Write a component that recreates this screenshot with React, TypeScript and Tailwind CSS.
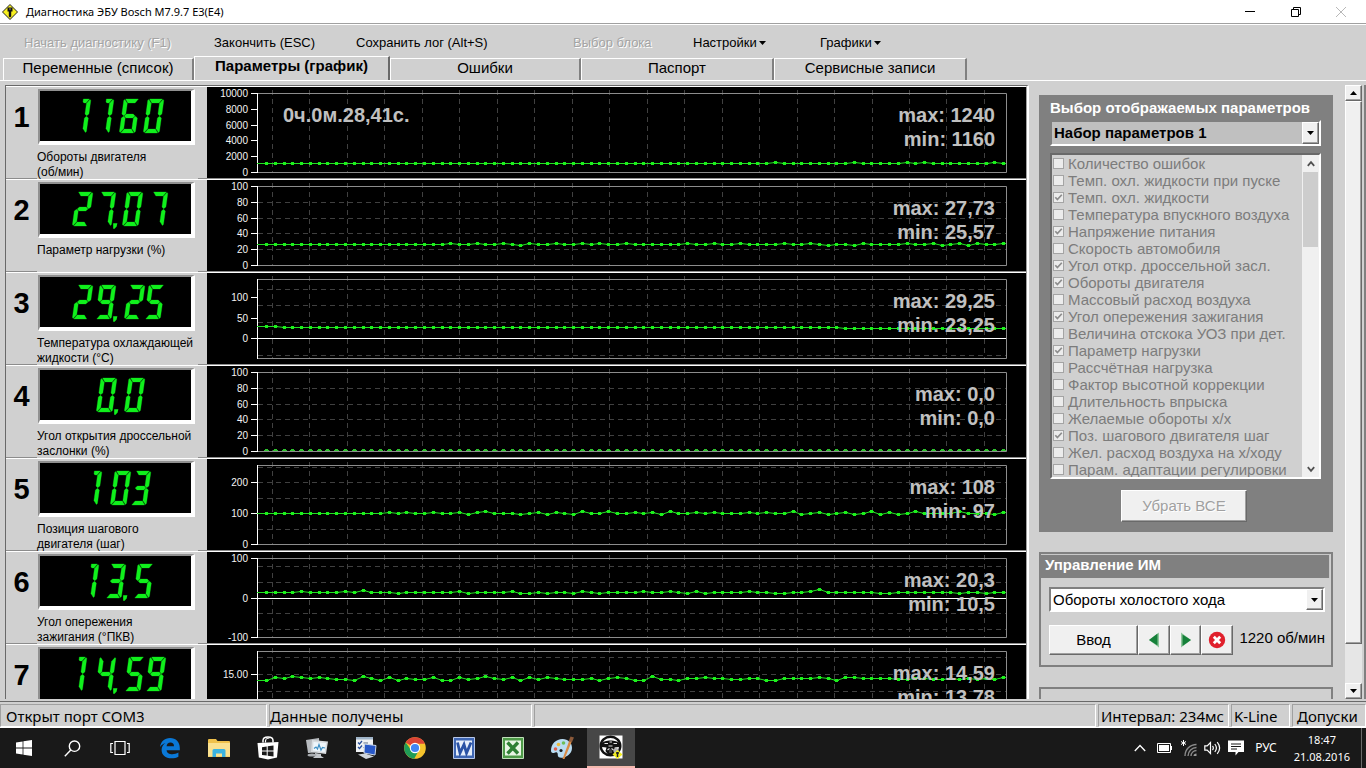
import React from "react";

type Param = {
  id: number;
  digits: string;
  edges: number[];
  label: string[];
  max: string;
  min: string;
  base: number;
  offsets: Record<number, number>;
  ticks: [number, string][];
  grid: number[];
  zero?: number;
  timer?: string;
};

const percentTicks: [number, string][] = [
  [6, "100"],
  [22, "80"],
  [38, "60"],
  [53, "40"],
  [69, "20"],
  [85, "0"],
];

const afrTrace = [
  1, -2, -1, -3, -2, -1, -2, -1, 0, 0, 1, -3, -1, 1, -2, 1, -1, 0, 0, -2, 1, 1, -2, 0, -1, -3, -1, 0, -2, 1, -2, 0, -2,
  -1, 0, 0, 0, -1, 1, -1, -2, -1, 1, 1, -3, 0, 0, 1, -1, -1, -2, -1, -1, 0, 0, -1, -1, 1, 1, -1, -1, -1, -1, -2, -1, 1,
  -2, -2, -1, -1, -1, -1, 0, 0, -1, -1, 0, 0, -1, 0, -1, 0, -1, 0, -2,
];

const lateDrop: Record<number, number> = { 0: -1, 1: -1 };
for (let i = 66; i < 85; i++) lateDrop[i] = 1;

const params: Param[] = [
  {
    id: 1,
    digits: "1160",
    edges: [51, 74, 100, 124],
    label: ["Обороты двигателя", "(об/мин)"],
    max: "1240",
    min: "1160",
    base: 76,
    offsets: { 58: -1, 67: -1, 73: -1, 75: -1, 83: -1 },
    ticks: [
      [6, "10000"],
      [22, "8000"],
      [38, "6000"],
      [53, "4000"],
      [69, "2000"],
      [85, "0"],
    ],
    grid: [],
    timer: "0ч.0м.28,41с.",
  },
  {
    id: 2,
    digits: "27,07",
    edges: [53, 76, 103, 128],
    label: ["Параметр нагрузки (%)"],
    max: "27,73",
    min: "25,57",
    base: 64,
    offsets: {
      21: -1, 24: -1, 27: -1, 29: 1, 30: -1, 33: -1, 36: -1, 38: -1, 41: -1, 48: -1, 51: -1, 54: -1, 59: -1, 62: -1,
      64: 1, 67: 1, 68: -1, 73: -1, 76: -1, 77: 1, 79: -1, 80: 1, 81: -1, 84: -1,
    },
    ticks: percentTicks,
    grid: [22, 38, 53, 69],
  },
  {
    id: 3,
    digits: "29,25",
    edges: [53, 76, 105, 125],
    label: ["Температура охлаждающей", "жидкости (°С)"],
    max: "29,25",
    min: "23,25",
    base: 54,
    offsets: lateDrop,
    ticks: [
      [24, "100"],
      [45, "50"],
      [65, "0"],
    ],
    grid: [16, 32, 49, 82],
    zero: 65,
  },
  {
    id: 4,
    digits: "0,0",
    edges: [77, 105],
    label: ["Угол открытия дроссельной", "заслонки (%)"],
    max: "0,0",
    min: "0,0",
    base: 85,
    offsets: {},
    ticks: percentTicks,
    grid: [22, 38, 53, 69],
  },
  {
    id: 5,
    digits: "103",
    edges: [62, 91, 111],
    label: ["Позиция шагового", "двигателя (шаг)"],
    max: "108",
    min: "97",
    base: 54,
    offsets: {
      14: -1, 16: -1, 19: -1, 22: -1, 23: 1, 24: -1, 25: -2, 29: 1, 31: -1, 32: 1, 33: -1, 35: 1, 36: -2, 39: -2,
      42: -1, 44: -1, 45: 1, 46: -2, 49: -1, 51: -1, 55: -1, 57: -1, 60: -2, 61: 1, 63: -1, 64: 1, 66: -1, 67: 1,
      69: -2, 70: 1, 71: -1, 72: 1, 74: -2, 79: -2, 83: 1, 84: -1,
    },
    ticks: [
      [23, "200"],
      [54, "100"],
      [85, "0"],
    ],
    grid: [8, 23, 39, 70],
  },
  {
    id: 6,
    digits: "13,5",
    edges: [59, 86, 114],
    label: ["Угол опережения", "зажигания (°ПКВ)"],
    max: "20,3",
    min: "10,5",
    base: 40,
    offsets: {
      4: -1, 9: -1, 11: -2, 15: 1, 22: -1, 23: 1, 28: -1, 29: 1, 30: 1, 32: 1, 35: 1, 36: -1, 38: 1, 43: -1, 46: -1,
      48: 1, 49: -1, 50: 1, 55: -1, 58: 1, 59: 1, 62: -1, 63: -3, 70: 1, 71: 1, 79: 1, 82: 1,
    },
    ticks: [
      [6, "100"],
      [46, "0"],
      [85, "-100"],
    ],
    grid: [14, 30, 61, 77],
    zero: 46,
  },
  {
    id: 7,
    digits: "14,59",
    edges: [47, 76, 105, 126],
    label: [],
    max: "14,59",
    min: "13,78",
    base: 34,
    offsets: Object.fromEntries(afrTrace.map((v, i) => [i, v])),
    ticks: [[29, "15.00"]],
    grid: [12, 29, 46],
  },
];

const segments: Record<string, string> = {
  a: "M2.6 0H15.4L12.6 3.9H5.4z",
  b: "M16.1 0.6L17 1.6V15L15 16.7L13.1 15V4.400z",
  c: "M15 17.300L17 19V32.400L16.100 33.400L13.100 29.600V19z",
  d: "M2.600 34H15.400L12.600 30.100H5.400z",
  e: "M3 17.300L4.900 19V29.600L1.900 33.400L1 32.400V19z",
  f: "M1.900 0.600L4.900 4.400V15L3 16.700L1 15V1.600z",
  g: "M3.600 17L5.600 15.100H12.400L14.400 17L12.400 18.900H5.600z",
  t: "M9.400 0H15.400L12.600 3.900H10.500L9.400 2.900z",
};

const glyphs: Record<string, string> = {
  "0": "abcdef",
  "1": "tbc",
  "2": "abdeg",
  "3": "abcdg",
  "4": "bcfg",
  "5": "acdfg",
  "6": "acdefg",
  "7": "abc",
  "9": "abcdfg",
};

function Led({ digits, edges }: { digits: string; edges: number[] }) {
  const parts: React.ReactNode[] = [];
  let n = 0;
  for (const ch of digits) {
    if (ch === ",") {
      parts.push(<path key={"c" + n} d={`M${edges[n - 1] - 2.8} 39.2h4.200l-0.800 3.200-2 2.400h-1.400z`} fill="#10f01c" />);
      continue;
    }
    parts.push(
      <g
        key={n}
        transform={`translate(${edges[n] - 17} 8) skewX(-8)`}
        fill="#10f01c"
        stroke="#10f01c"
        strokeWidth="0.3"
        strokeLinejoin="round"
      >
        {glyphs[ch].split("").map((s) => (
          <path key={s} d={segments[s]} />
        ))}
      </g>
    );
    n++;
  }
  return (
    <div className="ml-px h-[56px] w-[157px] border-t-2 border-r-4 border-b-4 border-l-2 border-t-[#909090] border-r-white border-b-white border-l-[#909090] bg-black">
      <svg className="block h-[50px] w-[151px]" viewBox="0 0 151 50" role="img" aria-label={digits}>
        {parts}
      </svg>
    </div>
  );
}

const verticals = Array.from({ length: 20 }, (_, k) => Math.round(65 + k * 37.47) + 0.5);

function Chart({ p }: { p: Param }) {
  const pts = Array.from({ length: 85 }, (_, i) => ({
    x: Math.round(59 + i * 8.775),
    y: p.base + (p.offsets[i] ?? 0),
  }));
  const line = "M50 " + (pts[0].y + 0.5) + pts.map((q) => `L${q.x + 0.5} ${q.y + 0.5}`).join("");
  const isFlatZero = p.base === 85;
  return (
    <div className="relative h-[91px] min-w-0 flex-1 overflow-hidden bg-black">
      <svg className="block h-[91px] w-full" viewBox="0 0 819 91" preserveAspectRatio="none">
        <g stroke="#404040" strokeWidth="1" strokeDasharray="5 4">
          {verticals.map((x) => (
            <path key={x} d={`M${x} 3V85`} />
          ))}
          {p.grid.map((y) => (
            <path key={y} d={`M51 ${y + 0.5}H799`} />
          ))}
        </g>
        {isFlatZero &&
          pts.map((q) => <path key={q.x} d={`M${q.x - 2} 85v-1h1v-1h3v1h1v1z`} fill="#2fc32f" />)}
        <path d="M50 6.5H799.5V85.5H50" fill="none" stroke="#8c8c8c" />
        {p.zero !== undefined && <path d={`M50 ${p.zero + 0.5}H799`} stroke="#ffffff" />}
        <path d="M50.5 6V86" stroke="#ffffff" />
        {!isFlatZero && (
          <>
            <path d={line} fill="none" stroke="#24dc24" strokeWidth="1" />
            {pts.map((q) => (
              <path key={q.x} d={`M${q.x - 1} ${q.y - 1}h3v1h1v1h-1v1h-3v-1h-1v-1h1z`} fill="#1cf01c" />
            ))}
          </>
        )}
        {p.ticks.map(([y, t]) => (
          <g key={t}>
            <path d={`M44 ${y + 0.5}H50`} stroke="#ffffff" />
            <text
              x="41"
              y={y + 4}
              textAnchor="end"
              fill="#f4f4f4"
              fontSize="10"
              fontFamily="'Liberation Sans Narrow','Liberation Sans',sans-serif"
            >
              {t}
            </text>
          </g>
        ))}
      </svg>
      {p.timer && (
        <span className="absolute top-[16px] left-[76px] text-[20px] leading-6 font-bold text-[#c0c0c0]">{p.timer}</span>
      )}
      <div className="absolute top-[16px] right-[31px] text-right text-[20px] leading-6 font-bold text-[#c0c0c0]">
        <div>max: {p.max}</div>
        <div>min: {p.min}</div>
      </div>
    </div>
  );
}

function ParamRow({ p }: { p: Param }) {
  return (
    <section className="flex h-[93px] shrink-0 border-b border-white">
      <div className="w-[31px] shrink-0 border-b border-[#8c8c8c] pt-3 text-center text-[29px] leading-9 font-bold">
        {p.id}
      </div>
      <div className="w-[161px] shrink-0 pt-[2px]">
        <Led digits={p.digits} edges={p.edges} />
        <div className="pt-[5px] text-[12px] leading-[15px] whitespace-nowrap">
          {p.label.map((l) => (
            <div key={l}>{l}</div>
          ))}
        </div>
      </div>
      <div className="w-[9px] shrink-0 border-b border-[#8c8c8c]" />
      <div className="min-w-0 flex-1 border-b border-[#8c8c8c]">
        <Chart p={p} />
      </div>
    </section>
  );
}

const options: [string, boolean][] = [
  ["Количество ошибок", false],
  ["Темп. охл. жидкости при пуске", false],
  ["Темп. охл. жидкости", true],
  ["Температура впускного воздуха", false],
  ["Напряжение питания", true],
  ["Скорость автомобиля", false],
  ["Угол откр. дроссельной засл.", true],
  ["Обороты двигателя", true],
  ["Массовый расход воздуха", false],
  ["Угол опережения зажигания", true],
  ["Величина отскока УОЗ при дет.", false],
  ["Параметр нагрузки", true],
  ["Рассчётная нагрузка", false],
  ["Фактор высотной коррекции", false],
  ["Длительность впрыска", false],
  ["Желаемые обороты х/х", false],
  ["Поз. шагового двигателя шаг", true],
  ["Жел. расход воздуха на х/ходу", false],
  ["Парам. адаптации регулировки", false],
];

function Option({ text, checked }: { text: string; checked: boolean }) {
  return (
    <label className="flex h-[17px] shrink-0 items-center gap-1 pl-px text-[15px] leading-[17px] whitespace-nowrap text-[#7c7c7c]">
      <span className="relative block h-[11px] w-[11px]">
        <input
          type="checkbox"
          disabled
          defaultChecked={checked}
          className="block h-[11px] w-[11px] appearance-none border border-[#a4a4a4] bg-[#ececec]"
        />
        {checked && (
          <svg className="absolute inset-0 h-[11px] w-[11px]" viewBox="0 0 11 11">
            <path d="M2.3 5.2L4.4 7.6L8.8 2.8" fill="none" stroke="#8c8c8c" strokeWidth="1.7" />
          </svg>
        )}
      </span>
      {text}
    </label>
  );
}

function Arrow({ up = false }: { up?: boolean }) {
  return (
    <svg className="block h-1 w-[7px]" viewBox="0 0 7 4">
      <path d={up ? "M0 4L3.5 0L7 4z" : "M0 0H7L3.5 4z"} fill="#000" />
    </svg>
  );
}

const bevel =
  "border border-t-white border-l-white border-r-[#696969] border-b-[#696969] bg-[#f0f0f0] shadow-[inset_-1px_-1px_0_#a0a0a0]";

function Picker({ label, value, className, height }: { label: string; value: string; className: string; height: string }) {
  return (
    <div
      className={
        "relative border-2 border-t-[#808080] border-r-white border-b-white border-l-[#808080] " + height + " " + className
      }
    >
      <select aria-label={label} className="h-full w-full appearance-none bg-transparent pl-[2px] outline-none">
        <option>{value}</option>
      </select>
      <span
        className={"pointer-events-none absolute top-0 right-0 flex h-full w-[17px] items-center justify-center " + bevel}
      >
        <Arrow />
      </span>
    </div>
  );
}

function Sidebar() {
  return (
    <div className="w-[294px] shrink-0 pt-[10px]">
      <section className="h-[437px] bg-[#808080] pt-1 pr-3 pl-[11px]">
        <h2 className="h-[21px] text-[15px] leading-[18px] font-bold whitespace-nowrap text-white">
          Выбор отображаемых параметров
        </h2>
        <Picker
          label="Набор параметров"
          value="Набор параметров 1"
          height="h-[26px]"
          className="bg-[#c0c0c0] text-[15px] font-bold text-black"
        />
        <div className="mt-[7px] flex h-[326px] border-2 border-t-[#696969] border-r-white border-b-white border-l-[#696969] bg-[#d0d0d0]">
          <div className="flex min-w-0 flex-1 flex-col overflow-hidden">
            {options.map(([t, c]) => (
              <Option key={t} text={t} checked={c} />
            ))}
          </div>
          <div className="flex w-[17px] flex-col bg-[#f0f0f0]">
            <button type="button" aria-label="Вверх" className="flex h-[17px] items-center justify-center">
              <svg className="h-2 w-2" viewBox="0 0 8 8">
                <path d="M0.8 5.8L4 2.2L7.2 5.8" fill="none" stroke="#505050" strokeWidth="1.8" />
              </svg>
            </button>
            <div className="ml-px h-[75px] w-[15px] bg-[#cdcdcd]" />
            <button type="button" aria-label="Вниз" className="mt-auto flex h-[17px] items-center justify-center">
              <svg className="h-2 w-2" viewBox="0 0 8 8">
                <path d="M0.8 2.2L4 5.8L7.2 2.2" fill="none" stroke="#505050" strokeWidth="1.8" />
              </svg>
            </button>
          </div>
        </div>
        <button
          type="button"
          disabled
          className={
            "mt-[11px] ml-[71px] block h-[32px] w-[126px] text-[15px] text-[#a0a0a0] [text-shadow:1px_1px_0_#fff] " + bevel
          }
        >
          Убрать ВСЕ
        </button>
      </section>

      <section className="mt-5 h-[115px] border-2 border-[#808080]">
        <h2 className="mr-px h-[24px] border-t border-r border-[#c8c8c8] bg-[#808080] pl-1 text-[15px] leading-[19px] font-bold text-white">
          Управление ИМ
        </h2>
        <div className="pt-[9px] pr-[6px] pl-2">
          <Picker
            label="Исполнительный механизм"
            value="Обороты холостого хода"
            height="h-[25px]"
            className="bg-white text-[15px] text-black"
          />
          <div className="mt-[13px] flex h-[30px] items-stretch">
            <button type="button" className={"w-[89px] text-[15px] " + bevel}>
              Ввод
            </button>
            <button type="button" aria-label="Меньше" className={"flex w-8 items-center justify-center " + bevel}>
              <svg className="h-4 w-3" viewBox="0 0 12 16">
                <path d="M11 0.500V15.500L1 8z" fill="#8fc79c" />
                <path d="M9.500 1.500V13.500L1 8z" fill="#16803a" />
              </svg>
            </button>
            <button type="button" aria-label="Больше" className={"flex w-[31px] items-center justify-center " + bevel}>
              <svg className="h-4 w-3" viewBox="0 0 12 16">
                <path d="M1 0.500V15.500L11 8z" fill="#8fc79c" />
                <path d="M2.500 2.500V14L11 8z" fill="#16803a" />
              </svg>
            </button>
            <button type="button" aria-label="Стоп" className={"flex w-8 items-center justify-center " + bevel}>
              <svg className="h-[18px] w-[18px]" viewBox="0 0 18 18">
                <circle cx="9" cy="9" r="8.2" fill="#e0202c" />
                <path d="M5.8 5.8L12.2 12.2M12.2 5.8L5.8 12.2" stroke="#fff" strokeWidth="2.8" />
              </svg>
            </button>
            <span className="ml-auto pt-[4px] text-[15px] leading-[17px] whitespace-nowrap">1220 об/мин</span>
          </div>
        </div>
      </section>

      <section className="mt-5 h-[60px] border-2 border-[#808080]" />
    </div>
  );
}

const menu = [
  { text: "Начать диагностику (F1)", w: "w-[190px]", off: true },
  { text: "Закончить (ESC)", w: "w-[142px]" },
  { text: "Сохранить лог (Alt+S)", w: "w-[217px]" },
  { text: "Выбор блока", w: "w-[120px]", off: true },
  { text: "Настройки", w: "w-[127px]", drop: true },
  { text: "Графики", w: "w-[100px]", drop: true },
];

const tabs = [
  { text: "Переменные (список)", w: "w-[191px]" },
  { text: "Параметры (график)", w: "w-[196px]", active: true },
  { text: "Ошибки", w: "w-[191px]" },
  { text: "Паспорт", w: "w-[193px]" },
  { text: "Сервисные записи", w: "w-[193px]" },
];

function TaskIcon({ label, children, active = false }: { label: string; children: React.ReactNode; active?: boolean }) {
  return (
    <button
      type="button"
      aria-label={label}
      className={
        active
          ? "mr-px flex h-full w-12 items-center justify-center border-b-2 border-[#f4b8ae] bg-[#474747]"
          : "mr-px flex h-full w-12 items-center justify-center"
      }
    >
      <svg className="h-6 w-6" viewBox="0 0 24 24">
        {children}
      </svg>
    </button>
  );
}

function Taskbar() {
  return (
    <footer className="flex h-10 shrink-0 bg-[#191919] font-['Noto_Sans','Open_Sans',sans-serif] text-white">
      <div className="flex">
        <button type="button" aria-label="Пуск" className="flex w-12 items-center justify-center">
          <svg className="h-4 w-4" viewBox="0 0 16 16" fill="#fff">
            <path d="M0 2.4L6.6 1.4V7.5H0zM7.4 1.3L16 0V7.5H7.4zM0 8.4H6.6V14.5L0 13.6zM7.4 8.4H16V16L7.4 14.7z" />
          </svg>
        </button>
        <button type="button" aria-label="Поиск" className="flex w-12 items-center justify-center">
          <svg className="h-[17px] w-[17px]" viewBox="0 0 17 17" fill="none" stroke="#fff" strokeWidth="1.4">
            <circle cx="10.5" cy="6.2" r="5.2" />
            <path d="M6.8 10L0.8 16.2" />
          </svg>
        </button>
        <button type="button" aria-label="Представление задач" className="mr-[2px] flex w-12 items-center justify-center">
          <svg className="h-4 w-5" viewBox="0 0 20 16" fill="none" stroke="#fff" strokeWidth="1.2">
            <path d="M5 1.5H15V14.5H5zM3 3.5H0.8V12.5H3M17 3.5H19.2V12.5H17" />
          </svg>
        </button>
        <TaskIcon label="Edge">
          <path
            d="M2 11.2C2.6 5.6 6.6 2 12 2c6 0 9.8 4 9.8 10v2.2H8.6c.2 2.8 2.6 4 5.6 4 2.4 0 4.400-.6 6.200-1.700v4.300c-1.900 1-4.300 1.500-7 1.500-6 0-9.800-3.200-9.800-8.300 0-3 1.400-5.500 3.900-7C4.700 7.800 3.100 9.200 2 11.200zM8.600 10.200h7.400c0-2.400-1.300-3.700-3.600-3.700-2.200 0-3.600 1.500-3.800 3.700z"
            fill="#0a78d7"
          />
        </TaskIcon>
        <TaskIcon label="Проводник">
          <path d="M1 4a1 1 0 011-1h7l1.500 2H22a1 1 0 011 1v15H1z" fill="#f0c14b" />
          <path d="M1 7H23V20.500H1z" fill="#fbe18f" />
          <path d="M5.500 21v-6.500a1.500 1.500 0 011.500-1.500h10a1.500 1.500 0 011.500 1.500V21h-3.500v-3.500H9V21z" fill="#3bb3e0" />
        </TaskIcon>
        <TaskIcon label="Магазин">
          <path d="M7 6.500V4.500C7 2.500 9 1 12 1s5 1.500 5 3.500v2" fill="none" stroke="#fff" strokeWidth="1.500" />
          <path d="M9.500 6.500V5c0-1.500 1.500-3 4-3" fill="none" stroke="#fff" strokeWidth="1.200" />
          <path d="M1.500 7L22.500 6L21 21.500L12 23.500L2.800 21.500z" fill="#fff" />
          <path
            d="M6 11.200L10.700 10.500V14.500H6zM11.700 10.300L17.500 9.500V14.500H11.700zM6 15.500H10.700V19.600L6 18.900zM11.700 15.500H17.500V20.600L11.700 19.700z"
            fill="#191919"
          />
        </TaskIcon>
        <TaskIcon label="Монитор">
          <path d="M1 4L14 2L15 16L3 17z" fill="#b8bcc0" />
          <path d="M7 4L23 5.500L21 18L6 16z" fill="#d9dde0" />
          <path d="M8.500 6L21 7L19.700 16L8 14.500z" fill="#eef6fb" />
          <path d="M9 12.500L11 11L12.500 13L14 8.500L16 14L17.500 11.500L20 12" fill="none" stroke="#3d8fc4" strokeWidth="1.200" />
          <path d="M10 17l6 1v2l3 2H8l2-2z" fill="#c4c8cc" />
          <ellipse cx="7" cy="19" rx="4.500" ry="1.600" fill="#a9adb1" />
        </TaskIcon>
        <TaskIcon label="Система">
          <path d="M2 1H19V16H2z" fill="#f0f2f4" />
          <path d="M2 1H19V3.500H2z" fill="#9fb4c8" />
          <path d="M4 6.500L5.500 8L8 5M4 11L5.500 12.500L8 9.500" fill="none" stroke="#2a4f9a" strokeWidth="1.300" />
          <path d="M9.500 7H14M9.500 11.500H13" stroke="#5a6a80" strokeWidth="1.200" />
          <path d="M10.500 8L22 9.500L21 19L10 17z" fill="#2858c8" stroke="#cdd8e8" strokeWidth="1" />
          <path d="M4 18.500L11 17.500L20 20.500L12 23z" fill="#d0d6dc" />
        </TaskIcon>
        <TaskIcon label="Chrome">
          <circle cx="12" cy="12" r="10.800" fill="#f5c32c" />
          <path d="M12 12L2.650 6.600A10.800 10.800 0 0121.900 7.700H12z" fill="#db4437" />
          <path d="M2.650 6.600A10.800 10.800 0 0011.200 22.800L15.800 14.600L12 12L7.800 13.500z" fill="#1f9d57" />
          <circle cx="12" cy="12" r="5.200" fill="#fff" />
          <circle cx="12" cy="12" r="4.100" fill="#4285f4" />
        </TaskIcon>
        <TaskIcon label="Word">
          <path d="M1.500 1.500H22.500V22.500H1.500z" fill="#3f67b4" stroke="#b8c8e8" strokeWidth="1" />
          <path d="M4 4.500H20V19.500H4z" fill="#e6eefa" />
          <path d="M5.500 6.500L8 17L12 8.500L14.500 17L19 6.500" fill="none" stroke="#2a52a4" strokeWidth="2.800" />
        </TaskIcon>
        <TaskIcon label="Excel">
          <path d="M1.500 1.500H22.500V22.500H1.500z" fill="#4e9a48" stroke="#bfe0b8" strokeWidth="1" />
          <path d="M4 4.500H20V19.500H4z" fill="#e8f5e4" />
          <path d="M6.500 6.500L17 17.500M17 6.500L6.500 17.500" fill="none" stroke="#2f7f34" strokeWidth="3.400" />
        </TaskIcon>
        <TaskIcon label="Paint">
          <path
            d="M12.500 3C6 3 1 8 1 14.500c0 1.500.5 2.500 2 2.500 1.500 0 2.500-1.500 4-.5 1.500 1 0 3 1.500 4.500 3 2.500 13.500-1 13.500-9C22 6.500 18 3 12.500 3z"
            fill="#b9dcf2"
          />
          <circle cx="5.500" cy="13" r="1.800" fill="#e0604c" />
          <circle cx="8.500" cy="8.500" r="1.800" fill="#eebb3a" />
          <circle cx="13.500" cy="7" r="1.800" fill="#6cbf58" />
          <circle cx="11" cy="14.500" r="1.600" fill="#191919" />
          <path d="M19.500 4L22 5L14.500 23L12.500 23z" fill="#d98a45" />
          <path d="M18.500 5.500L20.500 0.500L24 1.500L22 6z" fill="#8c5a3a" />
        </TaskIcon>
        <TaskIcon label="Диагностика" active>
          <path d="M0.500 0.500H23.500V23.500H0.500z" fill="#fff" />
          <ellipse cx="11.500" cy="11" rx="9.800" ry="9.300" fill="#fff" stroke="#111" strokeWidth="2.400" />
          <path d="M2.500 8.500C5 4.500 18 4.500 20.500 8.500L20 12L15.500 12.500L16.500 16L14 19.500H9L6.500 16L7.500 12.500L3 12z" fill="#111" />
          <path d="M5.500 8.500H9M10.500 7H13M14.500 8.500H18M9.500 11H13.500M8.500 15L10.500 13.500M12.500 13.500L14.500 15" stroke="#e4e4e4" strokeWidth="1.100" />
          <path d="M10 15.500L11.500 14L13 15.500V18H10z" fill="#444" />
          <circle cx="17" cy="15.500" r="2.600" fill="#b0b0b0" />
          <path d="M18.500 15L23.500 19.500L18.500 24L13.500 19.500z" fill="#f2ee20" />
          <path d="M18.500 17V22M17 18H20" stroke="#222" strokeWidth="1.500" />
        </TaskIcon>
      </div>
      <div className="ml-auto flex items-center">
        <svg className="mr-[11px] h-2 w-3" viewBox="0 0 12 8" fill="none" stroke="#fff" strokeWidth="1.300">
          <path d="M0.800 7L6 1.500L11.200 7" />
        </svg>
        <svg className="mr-[9px] h-[10px] w-[15px]" viewBox="0 0 15 10">
          <path d="M0.500 0.500H13.500V9.500H0.500z" fill="none" stroke="#fff" />
          <path d="M2 2H12V8H2zM13.500 3H15V7H13.500z" fill="#fff" />
        </svg>
        <svg className="mr-[7px] h-[17px] w-4" viewBox="0 0 16 17" fill="none">
          <path d="M2.500 0V6M0 1.500L5 4.500M5 1.500L0 4.500" stroke="#fff" strokeWidth="1" />
          <path d="M4 16C4 9.500 9 4.500 15.500 4.500M7 16C7 11.500 11 7.500 15.500 7.500M10 16C10 13 12.500 10.500 15.500 10.500" stroke="#8a8a8a" strokeWidth="1.400" />
          <path d="M12.500 16C12.500 14.500 13.500 13.500 15.500 13.500V16z" fill="#9a9a9a" />
        </svg>
        <svg className="mr-[7px] h-[14px] w-[17px]" viewBox="0 0 17 14" fill="none" stroke="#fff" strokeWidth="1.200">
          <path d="M0.800 4.800H3.200L6.500 1.500V12.500L3.200 9.200H0.800z" />
          <path d="M8.500 5C9.500 6.200 9.500 7.800 8.500 9M10.800 3C12.800 5.500 12.800 8.500 10.800 11M13.200 1.200C16.200 4.800 16.200 9.200 13.200 12.800" />
        </svg>
        <svg className="mr-[11px] h-4 w-4" viewBox="0 0 16 16">
          <path d="M0 0.500H16V12H10.500L7.500 15.500V12H0z" fill="#fff" />
          <path d="M3 4H13M3 6.500H13M3 9H9" stroke="#191919" strokeWidth="1.200" />
        </svg>
        <span className="mr-[17px] text-[12px] leading-4">РУС</span>
        <div className="mr-[11px] flex flex-col text-center text-[11px] leading-[17px]">
          <span>18:47</span>
          <span>21.08.2016</span>
        </div>
        <div className="mr-1 h-full w-px bg-[#6a6a6a]" />
      </div>
    </footer>
  );
}

const statusCell = "border border-t-[#a0a0a0] border-l-[#a0a0a0] border-r-white border-b-white ";

export default function App() {
  return (
    <div className="flex h-screen flex-col overflow-hidden bg-[#d0d0d0] font-['Liberation_Sans',Arial,sans-serif] text-black">
      <header className="flex h-6 shrink-0 items-center border-b border-[#a0a0a0] bg-white">
        <svg className="ml-[2px] h-4 w-4" viewBox="0 0 16 16">
          <path d="M8 0.500L15.500 8L8 15.500L0.500 8z" fill="#f8f020" stroke="#222" strokeWidth="1" />
          <path d="M5.500 3.500H10.500V7.500H9.200V12.500L8 13.500L6.800 12.500V7.500H5.500z" fill="#111" />
          <path d="M7.500 4.500H8.500V5.500H7.500z" fill="#fff" />
        </svg>
        <h1 className="ml-2 font-['Noto_Sans','Open_Sans',sans-serif] text-[11px] leading-5 whitespace-nowrap">
          Диагностика ЭБУ Bosch M7.9.7 E3(E4)
        </h1>
        <div className="ml-auto flex items-center">
          <button type="button" aria-label="Свернуть" className="flex h-5 w-[46px] items-center justify-center">
            <svg className="h-[10px] w-[10px]" viewBox="0 0 10 10">
              <path d="M0 4.500H10" stroke="#000" />
            </svg>
          </button>
          <button type="button" aria-label="Восстановить" className="flex h-5 w-[45px] items-center justify-center">
            <svg className="h-[10px] w-[10px]" viewBox="0 0 10 10" fill="none" stroke="#000">
              <path d="M0.500 2.500H7.500V9.500H0.500zM2.500 2.500V0.500H9.500V7.500H7.500" />
            </svg>
          </button>
          <button type="button" aria-label="Закрыть" className="mr-[2px] flex h-5 w-[46px] items-center justify-center">
            <svg className="h-[10px] w-[10px]" viewBox="0 0 10 10">
              <path d="M0 0L10 10M10 0L0 10" stroke="#b8b8b8" />
            </svg>
          </button>
        </div>
      </header>

      <nav className="flex h-8 shrink-0 items-center border-t border-white pt-1 pl-6 text-[13px]">
        {menu.map((m) => (
          <div key={m.text} className={"shrink-0 " + m.w}>
            <button
              type="button"
              disabled={m.off}
              className={
                "flex items-center whitespace-nowrap " + (m.off ? "text-[#a4a4a4] [text-shadow:1px_1px_0_#fff]" : "")
              }
            >
              {m.text}
              {m.drop && (
                <span className="ml-[2px]">
                  <Arrow />
                </span>
              )}
            </button>
          </div>
        ))}
      </nav>

      <div role="tablist" className="flex h-6 shrink-0 items-end pl-[3px]">
        {tabs.map((t) => (
          <button
            key={t.text}
            type="button"
            role="tab"
            aria-selected={!!t.active}
            className={
              t.active
                ? "z-10 h-6 shrink-0 border-t border-r-2 border-l border-t-white border-r-[#696969] border-l-white bg-[#d0d0d0] pb-[5px] text-[15px] leading-[18px] font-bold " + t.w
                : "h-[22px] shrink-0 border-t border-r-2 border-l border-t-white border-r-[#808080] border-l-white pb-[3px] text-[15px] leading-[18px] " + t.w
            }
          >
            {t.text}
          </button>
        ))}
      </div>

      <main className="flex min-h-0 flex-1 flex-col border-t border-white pt-1">
        <div className="flex min-h-0 flex-1">
          <div className="ml-[5px] min-w-0 flex-1 overflow-hidden border-t border-r-2 border-l border-t-[#696969] border-r-white border-l-[#696969]">
            <div className="border-t border-r border-white border-r-[#a0a0a0]">
              {params.map((p) => (
                <ParamRow key={p.id} p={p} />
              ))}
            </div>
          </div>
          <aside className="flex w-[337px] shrink-0 overflow-hidden pl-[10px]">
            <Sidebar />
            <div className="ml-3 flex w-[17px] shrink-0 flex-col">
              <button type="button" aria-label="Прокрутить вверх" className={"flex h-4 items-center justify-center " + bevel}>
                <Arrow up />
              </button>
              <div className={"min-h-0 flex-1 " + bevel} />
              <div className="h-[39px] bg-[#e6e6e6]" />
              <button type="button" aria-label="Прокрутить вниз" className={"flex h-4 items-center justify-center " + bevel}>
                <Arrow />
              </button>
            </div>
            <div className="ml-auto w-[2px] bg-[#808080]" />
          </aside>
        </div>
        <div className="h-[3px] shrink-0 border-b border-[#696969]" />
      </main>

      <div className="flex h-[26px] shrink-0 gap-[2px] border-b border-white pt-[2px] font-['Noto_Sans','Open_Sans',sans-serif] text-[15px] leading-[23px] whitespace-nowrap">
        <div className={statusCell + "w-[267px] pl-[5px]"}>Открыт порт COM3</div>
        <div className={statusCell + "w-[263px]"}>Данные получены</div>
        <div className={statusCell + "min-w-0 flex-1"} />
        <div className={statusCell + "w-[131px] pl-[2px]"}>Интервал: 234мс</div>
        <div className={statusCell + "w-[59px] pl-[2px]"}>K-Line</div>
        <div className={statusCell + "w-[74px] pl-[4px]"}>Допуски</div>
      </div>

      <Taskbar />
    </div>
  );
}
